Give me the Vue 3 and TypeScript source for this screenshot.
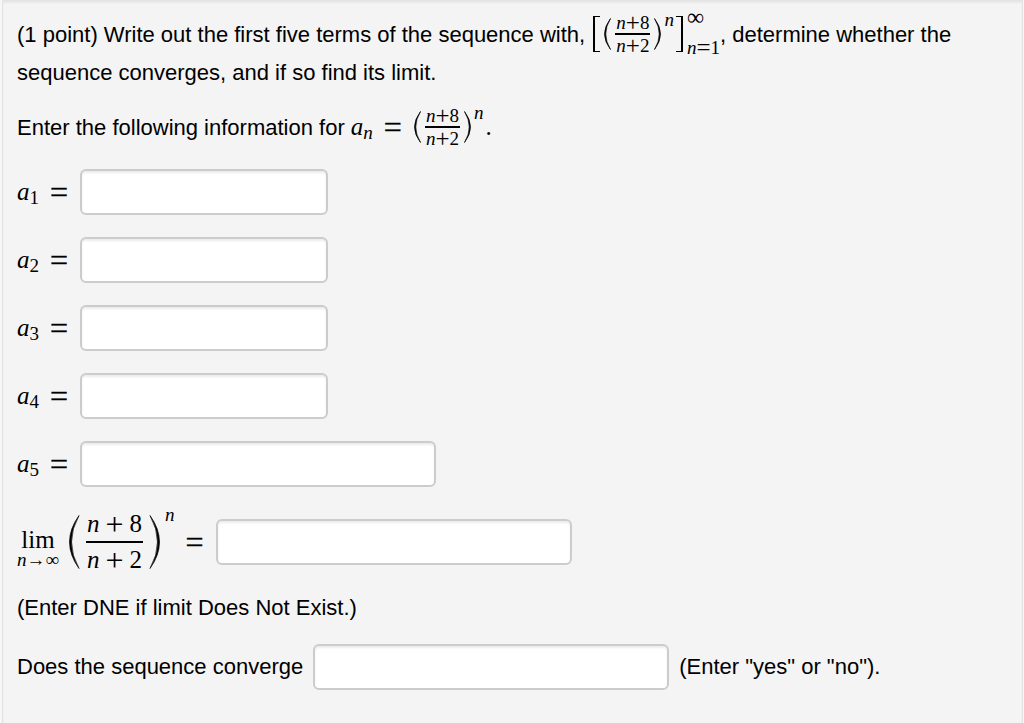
<script setup lang="ts">
import { reactive, ref } from 'vue'

interface Term {
  index: number
  wide: boolean
}

const terms: Term[] = [
  { index: 1, wide: false },
  { index: 2, wide: false },
  { index: 3, wide: false },
  { index: 4, wide: false },
  { index: 5, wide: true },
]

const answers = reactive<Record<number, string>>({ 1: '', 2: '', 3: '', 4: '', 5: '' })
const limit = ref('')
const converges = ref('')
</script>

<template>
  <main class="problem">
    <p class="text">
      (1 point) Write out the first five terms of the sequence with,
      <span class="math small sequence">
        <span class="bracket open"></span>
        <svg class="paren" viewBox="0 0 8 32" aria-hidden="true"><path d="M7.5 0.5Q-4.5 16 7.5 31.5Q-2 16 7.5 0.5Z" /></svg>
        <span class="frac">
          <span class="part"><i>n</i><span class="op">+</span>8</span>
          <span class="part"><i>n</i><span class="op">+</span>2</span>
        </span>
        <svg class="paren" viewBox="0 0 8 32" aria-hidden="true"><path d="M0.5 0.5Q12.5 16 0.5 31.5Q10 16 0.5 0.5Z" /></svg>
        <i class="power">n</i>
        <span class="bracket close"></span>
        <span class="range">
          <span class="infinity">∞</span>
          <span class="part"><i>n</i><span class="op">=</span>1</span>
        </span>
      </span>, determine whether the sequence converges, and if so find its limit.
    </p>

    <p class="text">
      Enter the following information for
      <span class="math small definition">
        <span class="variable"><i>a</i><i class="sub">n</i></span>
        <span class="equals">=</span>
        <svg class="paren" viewBox="0 0 8 32" aria-hidden="true"><path d="M7.5 0.5Q-4.5 16 7.5 31.5Q-2 16 7.5 0.5Z" /></svg>
        <span class="frac">
          <span class="part"><i>n</i><span class="op">+</span>8</span>
          <span class="part"><i>n</i><span class="op">+</span>2</span>
        </span>
        <svg class="paren" viewBox="0 0 8 32" aria-hidden="true"><path d="M0.5 0.5Q12.5 16 0.5 31.5Q10 16 0.5 0.5Z" /></svg>
        <i class="power">n</i>
        <span class="stop">.</span>
      </span>
    </p>

    <div class="terms">
      <div v-for="term in terms" :key="term.index" class="row">
        <label class="math label" :for="`term-${term.index}`">
          <span class="variable"><i>a</i><span class="sub">{{ term.index }}</span></span>
          <span class="equals">=</span>
        </label>
        <input
          :id="`term-${term.index}`"
          v-model="answers[term.index]"
          class="answer"
          :class="{ wide: term.wide }"
          type="text"
          autocomplete="off"
        />
      </div>
    </div>

    <div class="row limit">
      <label class="math label" for="limit">
        <span class="lim">
          <span class="word">lim</span>
          <span class="under"><i>n</i>→∞</span>
        </span>
        <svg class="paren tall" viewBox="0 0 12 54" aria-hidden="true"><path d="M11 0.5Q-8 27 11 53.5Q-4 27 11 0.5Z" /></svg>
        <span class="frac display">
          <span class="part"><i>n</i><span class="op">+</span>8</span>
          <span class="part"><i>n</i><span class="op">+</span>2</span>
        </span>
        <svg class="paren tall" viewBox="0 0 12 54" aria-hidden="true"><path d="M1 0.5Q20 27 1 53.5Q16 27 1 0.5Z" /></svg>
        <i class="power">n</i>
        <span class="equals">=</span>
      </label>
      <input id="limit" v-model="limit" class="answer wide" type="text" autocomplete="off" />
    </div>

    <p class="text note">(Enter DNE if limit Does Not Exist.)</p>

    <div class="row question">
      <label for="converges">Does the sequence converge</label>
      <input id="converges" v-model="converges" class="answer wide" type="text" autocomplete="off" />
      <span>(Enter "yes" or "no").</span>
    </div>
  </main>
</template>

<style>
body {
  margin: 0;
  background: #f7f7f7;
}
</style>

<style scoped>
.problem {
  box-sizing: border-box;
  min-height: 100vh;
  margin: 0 1px 0 2px;
  padding: 15px 14px 32px 14px;
  border: solid #e3e3e3;
  border-width: 1px 1px 0;
  background: #f4f4f4;
  box-shadow: inset 0 2px 2px rgba(0, 0, 0, 0.05);
  color: #000;
  font-family: "Liberation Sans", Helvetica, Arial, sans-serif;
  font-size: 22px;
}

.text {
  margin: 0 0 18px;
  line-height: 37px;
}

.math {
  font-family: "Liberation Serif", "Times New Roman", serif;
  font-size: 25px;
  line-height: 26px;
  white-space: nowrap;
}

.small {
  display: inline-flex;
  align-items: center;
  height: 32px;
  margin-bottom: 4px;
  vertical-align: middle;
}

.bracket {
  box-sizing: border-box;
  width: 7px;
  height: 36px;
  border: solid #000;
}

.open {
  border-width: 1px 0 1px 2px;
  margin-right: 3px;
}

.close {
  border-width: 1px 2px 1px 0;
  margin-left: 2px;
}

.paren {
  flex: none;
  width: 8px;
  height: 32px;
  stroke: #000;
  stroke-width: 0.7;
}

.tall {
  width: 12px;
  height: 54px;
}

.frac {
  display: flex;
  flex-direction: column;
  margin: 0 4px;
  font-size: 19px;
}

.part {
  display: flex;
  align-items: center;
  justify-content: center;
  height: 21px;
  line-height: 21px;
}

.frac .part {
  padding: 0 1px;
}

.frac .part:first-child {
  border-bottom: 2px solid #000;
}

.op {
  font-size: 25px;
}

.power {
  align-self: flex-start;
  margin: -4px 0 0 2px;
  font-size: 19px;
  line-height: 12px;
}

.sequence {
  margin-left: 2px;
}

.range {
  display: flex;
  flex-direction: column;
  justify-content: space-between;
  height: 48px;
  margin-left: 4px;
  font-size: 19px;
}

.infinity {
  font-size: 24px;
  line-height: 14px;
}

.variable {
  display: flex;
  align-items: baseline;
  padding-top: 2px;
}

.sub {
  position: relative;
  top: 4px;
  font-size: 19px;
}

.equals {
  margin: 0 12px 0 11px;
  font-size: 32px;
  -webkit-text-stroke: 0.4px #000;
}

.definition .equals {
  margin-right: 11px;
}

.stop {
  margin-left: 2px;
}

.row {
  display: flex;
  align-items: center;
}

.terms {
  display: flex;
  flex-direction: column;
  gap: 22px;
  margin-top: 22px;
}

.label {
  display: flex;
  align-items: center;
}

.answer {
  box-sizing: border-box;
  flex: 0 1 auto;
  width: 248px;
  min-width: 0;
  height: 46px;
  padding: 0 12px;
  border: 2px solid #ccc;
  border-radius: 6px;
  outline: none;
  background: #fff;
  box-shadow: inset 0 2px 2px rgba(0, 0, 0, 0.075);
  color: #000;
  font: inherit;
}

.answer.wide {
  width: 356px;
}

.answer:focus {
  border-color: #66afe9;
}

.limit {
  margin-top: 20px;
}

.lim {
  display: flex;
  flex-direction: column;
  align-items: center;
  margin-right: 9px;
  padding-top: 10px;
}

.under {
  font-size: 19px;
  line-height: 14px;
}

.display {
  margin: 0 6px;
  font-size: 25px;
}

.display .part {
  height: 34px;
  line-height: 34px;
}

.display .op {
  margin: 0 6px;
  font-size: 32px;
}

.limit .power {
  margin: 2px 0 0 4px;
}

.note {
  margin: 12px 0 18px;
}

.question {
  gap: 10px;
}
</style>
